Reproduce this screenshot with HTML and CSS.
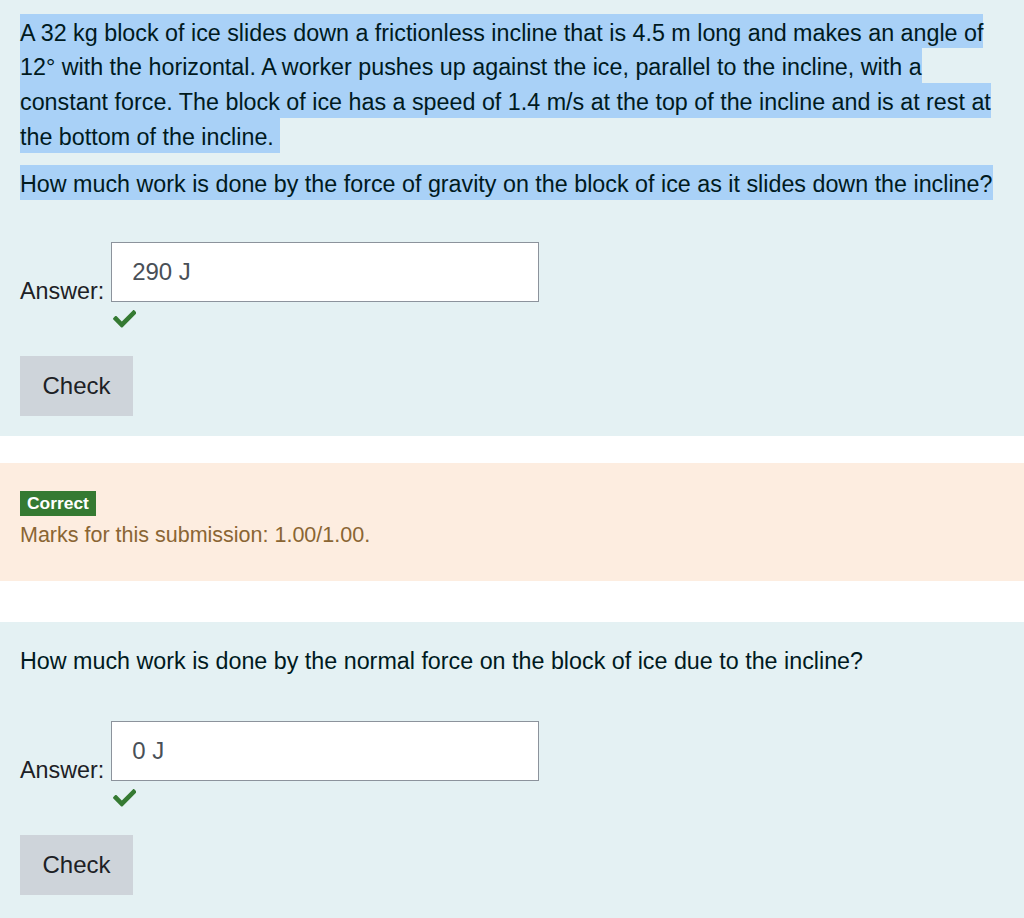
FILE: index.html
```html
<!DOCTYPE html>
<html lang="en">
<head>
<meta charset="utf-8">
<title>Quiz question</title>
<link rel="stylesheet" href="styles.css">
</head>
<body>
<div class="que">
  <section class="formulation first">
    <div class="qtext">
      <p class="para"><span class="hl">A 32 kg block of ice slides down a frictionless incline that is 4.5 m long and makes an angle of 12° with the horizontal. A worker pushes up against the ice, parallel to the incline, with a constant force. The block of ice has a speed of 1.4 m/s at the top of the incline and is at rest at the bottom of the incline.&nbsp;</span></p>
      <p class="para"><span class="hl">How much work is done by the force of gravity on the block of ice as it slides down the incline?</span></p>
    </div>
    <div class="ablock">
      <label class="alabel" for="ans1">Answer:</label>
      <input class="ainput" id="ans1" type="text" value="290 J" readonly>
      <svg class="tick" viewBox="0 64 512 384" aria-label="Correct"><path d="M173.898 439.404l-166.4-166.4c-9.997-9.997-9.997-26.206 0-36.204l36.203-36.204c9.997-9.998 26.207-9.998 36.204 0L192 312.69 432.095 72.596c9.997-9.997 26.207-9.997 36.204 0l36.203 36.204c9.997 9.997 9.997 26.206 0 36.204l-294.4 294.401c-9.998 9.997-26.207 9.997-36.204-.001z"/></svg>
    </div>
    <button class="btn-check" type="button">Check</button>
  </section>

  <section class="outcome">
    <div class="badge-row"><span class="badge">Correct</span></div>
    <div class="marks">Marks for this submission: 1.00/1.00.</div>
  </section>

  <section class="formulation second">
    <div class="qtext">
      <p class="para">How much work is done by the normal force on the block of ice due to the incline?</p>
    </div>
    <div class="ablock">
      <label class="alabel" for="ans2">Answer:</label>
      <input class="ainput" id="ans2" type="text" value="0 J" readonly>
      <svg class="tick" viewBox="0 64 512 384" aria-label="Correct"><path d="M173.898 439.404l-166.4-166.4c-9.997-9.997-9.997-26.206 0-36.204l36.203-36.204c9.997-9.998 26.207-9.998 36.204 0L192 312.69 432.095 72.596c9.997-9.997 26.207-9.997 36.204 0l36.203 36.204c9.997 9.997 9.997 26.206 0 36.204l-294.4 294.401c-9.998 9.997-26.207 9.997-36.204-.001z"/></svg>
    </div>
    <button class="btn-check" type="button">Check</button>
  </section>
</div>
</body>
</html>
```

FILE: styles.css
```css
html, body {
  margin: 0;
  padding: 0;
  background: #ffffff;
}

body {
  font-family: "Liberation Sans", Arial, Helvetica, sans-serif;
  font-size: 23.3px;
  line-height: 34.8px;
  color: #001a1e;
}

.que {
  display: flex;
  flex-direction: column;
}

.formulation {
  background: #e4f1f3;
  padding: 0 20px 20px 20px;
}

.formulation.first {
  padding-top: 15px;
}

.formulation.first .qtext {
  margin-bottom: 41px;
}

.formulation.second {
  padding-top: 22px;
  padding-bottom: 24px;
}

.qtext {
  display: flex;
  flex-direction: column;
  gap: 12px;
  margin-bottom: 42px;
}

.para {
  margin: 0;
}

.hl {
  background: #a9d1f7;
  padding: 5.5px 0 3.4px 0;
}

.ablock {
  display: grid;
  grid-template-columns: max-content 428px;
  column-gap: 7px;
  row-gap: 8px;
}

.alabel {
  align-self: end;
  line-height: 1;
  margin-bottom: -1.5px;
  color: #1d2125;
}

.ainput {
  box-sizing: border-box;
  width: 428px;
  height: 60px;
  margin: 0;
  padding: 0 20px;
  border: 1px solid #8c939c;
  border-radius: 0;
  background: #ffffff;
  font-family: inherit;
  font-size: 24px;
  color: #495057;
  outline: none;
}

.tick {
  grid-column: 2;
  width: 23.5px;
  height: 17.6px;
  margin-left: 1.5px;
  fill: #357a32;
}

.btn-check {
  display: block;
  height: 60px;
  margin-top: 28px;
  padding: 0 22.5px;
  border: 0;
  border-radius: 0;
  background: #ced4da;
  color: #1d2125;
  font-family: inherit;
  font-size: 24px;
  line-height: 1;
}

.outcome {
  margin: 27px 0 41px 0;
  padding: 28px 20px 30px 20px;
  background: #fdede0;
}

.badge-row {
  display: flex;
}

.badge {
  display: inline-block;
  padding: 4px 7px;
  background: #357a32;
  color: #ffffff;
  font-weight: bold;
  font-size: 17.4px;
  line-height: 1;
}

.marks {
  padding-top: 3px;
  font-size: 21.5px;
  line-height: 1.5;
  color: #8a6533;
}
```
